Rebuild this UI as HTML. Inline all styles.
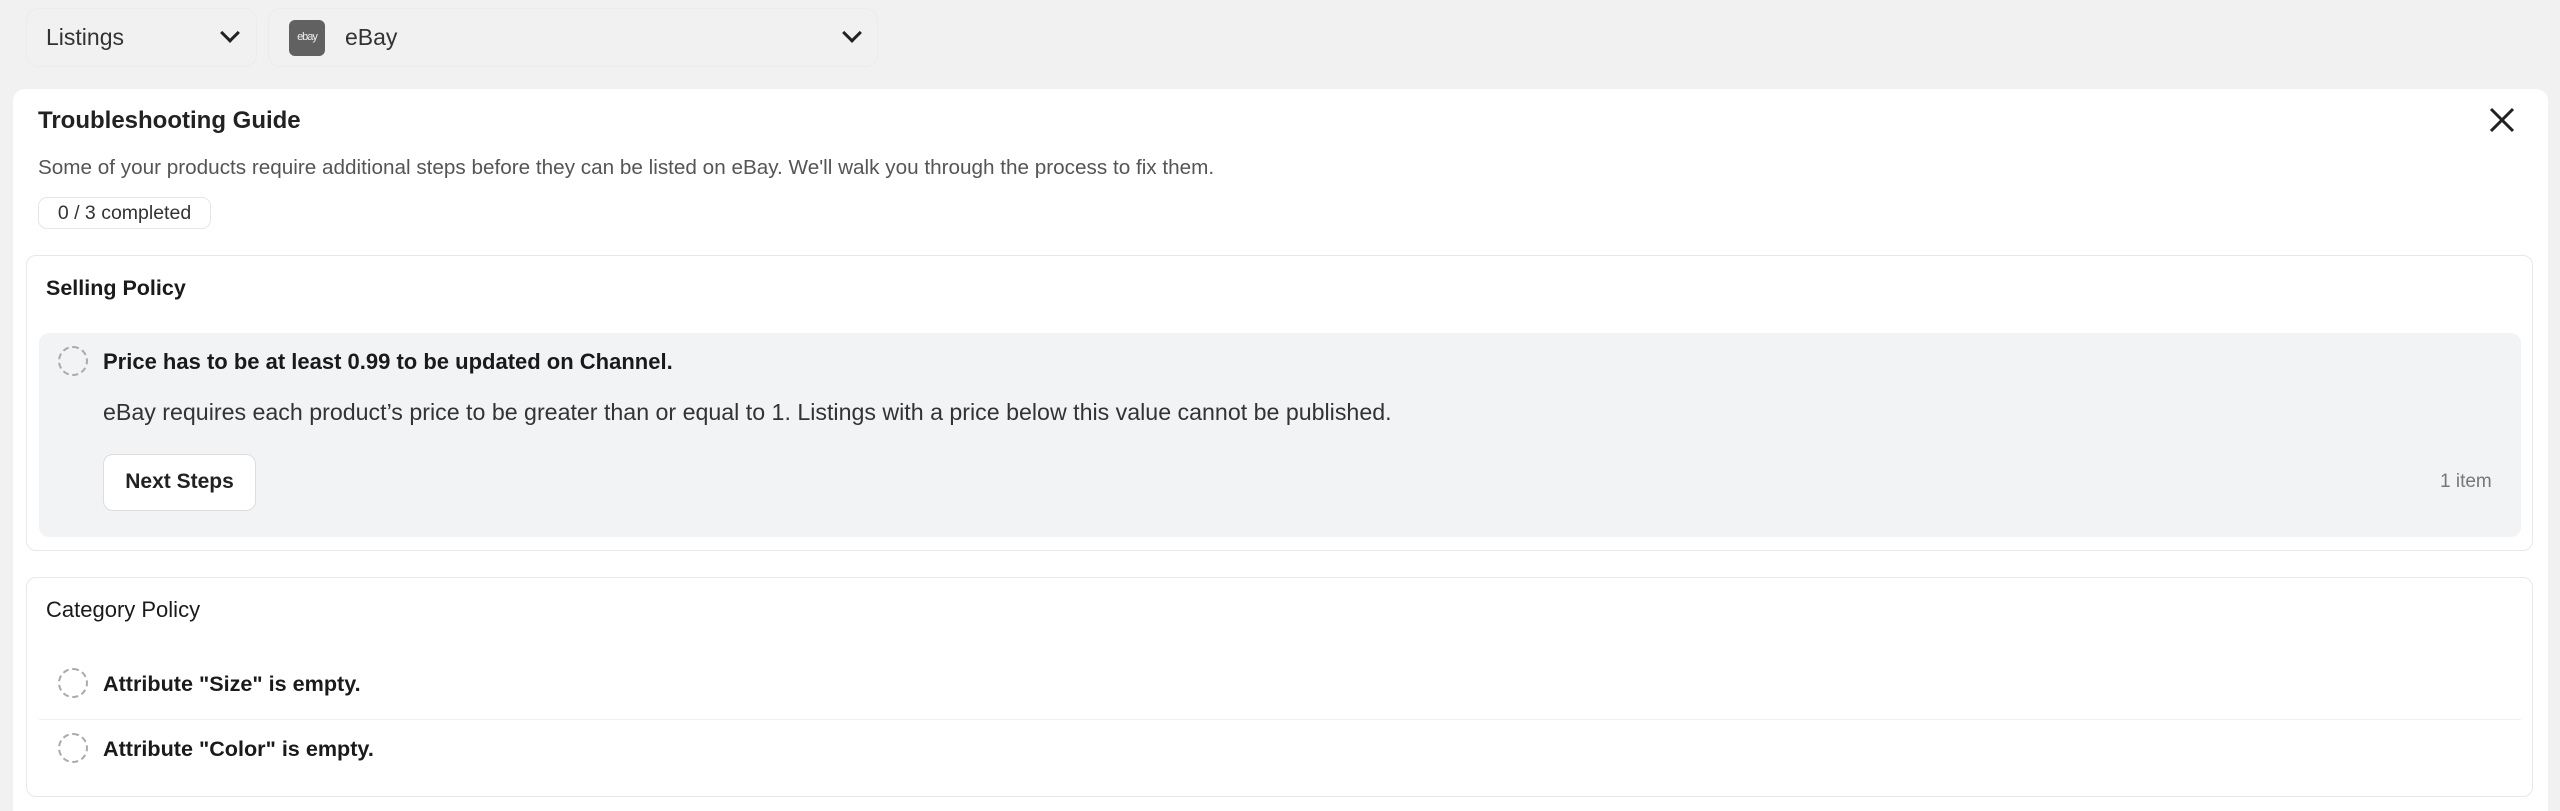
<!DOCTYPE html>
<html style="overflow:hidden;height:811px"><head><style>
*{box-sizing:border-box;margin:0;padding:0}
body{width:2560px;height:811px;background:#f1f1f1;font-family:"Liberation Sans",sans-serif;color:#222;position:relative;overflow:hidden}
.a{position:absolute}
.dd{position:absolute;top:8px;height:59px;border:1px solid #ececec;border-radius:12px}
.chev{position:absolute;width:14px;height:14px;border-right:3px solid #222;border-bottom:3px solid #222;transform:rotate(45deg)}
.panel{left:13px;top:89px;width:2535px;height:722px;background:#fff;border-radius:12px 12px 0 0}
.card{left:26px;width:2507px;border:1.5px solid #e8e8e8;border-radius:10px;background:#fff}
.circ{position:absolute;width:30px;height:30px;border:2px dashed #aaa;border-radius:50%}
.b{font-weight:bold;font-size:21.5px;color:#1a1a1a}
</style></head><body>
<div class="dd" style="left:26px;width:231px"></div>
<div class="dd" style="left:268px;width:610px"></div>
<div class="a" style="left:46px;top:24px;font-size:23px;color:#333">Listings</div>
<div class="chev" style="left:223px;top:26px"></div>
<div class="a" style="left:289px;top:20px;width:36px;height:36px;background:#616161;border-radius:6px;color:#eee;font-size:11px;letter-spacing:-1px;text-align:center;line-height:34px">ebay</div>
<div class="a" style="left:345px;top:24px;font-size:23px;color:#333">eBay</div>
<div class="chev" style="left:845px;top:26px"></div>
<div class="a panel"></div>
<svg class="a" style="left:2489px;top:107px" width="26" height="26" viewBox="0 0 26 26"><path d="M2 2L24 24M24 2L2 24" stroke="#222" stroke-width="3"/></svg>
<div class="a" style="left:38px;top:107px;font-size:24px;font-weight:bold;color:#222">Troubleshooting Guide</div>
<div class="a" style="left:38px;top:156px;font-size:20.7px;color:#555">Some of your products require additional steps before they can be listed on eBay. We'll walk you through the process to fix them.</div>
<div class="a" style="left:38px;top:197px;width:173px;height:32px;border:1px solid #e6e6e6;border-radius:9px;font-size:19.5px;color:#333;text-align:center;line-height:30px">0 / 3 completed</div>
<div class="a card" style="top:255px;height:296px"></div>
<div class="a b" style="left:46px;top:276px">Selling Policy</div>
<div class="a" style="left:39px;top:333px;width:2482px;height:204px;background:#f2f3f5;border-radius:10px"></div>
<div class="circ" style="left:58px;top:346px"></div>
<div class="a b" style="left:103px;top:349px;font-size:22px">Price has to be at least 0.99 to be updated on Channel.</div>
<div class="a" style="left:103px;top:399px;font-size:23.2px;color:#333">eBay requires each product’s price to be greater than or equal to 1. Listings with a price below this value cannot be published.</div>
<div class="a" style="left:103px;top:454px;width:153px;height:57px;background:#fff;border:1.5px solid #ddd;border-radius:10px;font-size:21px;font-weight:bold;color:#222;text-align:center;line-height:54px">Next Steps</div>
<div class="a" style="left:2440px;top:471px;font-size:19px;color:#777">1 item</div>
<div class="a card" style="top:577px;height:220px"></div>
<div class="a" style="left:46px;top:597px;font-size:22px;color:#1a1a1a">Category Policy</div>
<div class="circ" style="left:58px;top:668px"></div>
<div class="a b" style="left:103px;top:671px;font-size:21.6px">Attribute "Size" is empty.</div>
<div class="a" style="left:39px;top:719px;width:2482px;height:1px;background:#f0f0f0"></div>
<div class="circ" style="left:58px;top:733px"></div>
<div class="a b" style="left:103px;top:736px;font-size:21.6px">Attribute "Color" is empty.</div>
</body></html>
